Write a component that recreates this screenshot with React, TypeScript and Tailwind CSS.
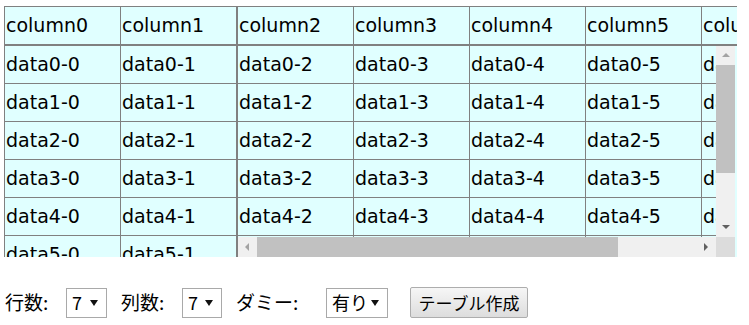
import React from 'react'

const ROWS = 7
const COLS = 7
const FROZEN = 2

const cellCls =
  'w-[116px] shrink-0 border-r border-b border-[#808080] bg-[#e0ffff] px-[1px] flex items-center whitespace-nowrap overflow-hidden'

const HeaderCells = ({ from, to }) => (
  <>
    {Array.from({ length: to - from }, (_, i) => (
      <div key={i} className={`${cellCls} h-[39px] border-b-2`}>
        column{from + i}
      </div>
    ))}
  </>
)

const BodyRows = ({ from, to }) => (
  <>
    {Array.from({ length: ROWS }, (_, r) => (
      <div key={r} className="flex">
        {Array.from({ length: to - from }, (_, c) => (
          <div key={c} className={`${cellCls} h-[38px]`}>
            data{r}-{from + c}
          </div>
        ))}
      </div>
    ))}
  </>
)

const Arrow = ({ dir, dark }) => {
  const pts = {
    up: '1,6 5,2 9,6',
    down: '1,2 5,6 9,2',
    left: '6,1 2,5 6,9',
    right: '2,1 6,5 2,9',
  }[dir]
  return (
    <svg width="10" height="10" viewBox="0 0 10 10">
      <polygon points={pts} fill={dark ? '#606060' : '#a3a3a3'} />
    </svg>
  )
}

const Dropdown = ({ value, width }) => (
  <div
    className={`${width} h-[30px] shrink-0 flex items-center justify-between border border-[#a9a9a9] bg-white pl-[5px] pr-[8px] text-[18px]`}
  >
    <span>{value}</span>
    <svg width="8" height="6" viewBox="0 0 8 6" className="mt-[1px]">
      <polygon points="0,0 8,0 4,6" fill="#111" />
    </svg>
  </div>
)

export default function App() {
  return (
    <div className="pt-[6px] pl-1 text-black font-['DejaVu_Sans',sans-serif] text-[19px]">
      {/* table */}
      <div className="flex items-start">
        {/* frozen columns */}
        <div className="shrink-0 border-l border-r border-[#808080]">
          <div className="flex border-t border-[#808080]">
            <HeaderCells from={0} to={FROZEN} />
          </div>
          <div className="h-[211px] overflow-hidden">
            <BodyRows from={0} to={FROZEN} />
          </div>
        </div>

        {/* scrolling columns */}
        <div className="w-[499px] shrink-0">
          <div className="flex overflow-hidden border-t border-[#808080] bg-[#e0ffff]">
            <HeaderCells from={FROZEN} to={COLS} />
          </div>
          <div className="flex h-[211px] bg-[#e0ffff]">
            <div className="flex w-[478px] shrink-0 flex-col">
              <div className="h-[191px] overflow-hidden">
                <BodyRows from={FROZEN} to={COLS} />
              </div>
              <div className="flex h-[20px] bg-[#f0f0f0]">
                <div className="flex w-[19px] items-center justify-center">
                  <Arrow dir="left" />
                </div>
                <div className="w-[361px] bg-[#c1c1c1]" />
                <div className="flex-1" />
                <div className="flex w-[19px] items-center justify-center">
                  <Arrow dir="right" dark />
                </div>
              </div>
            </div>
            <div className="flex w-[19px] shrink-0 flex-col bg-[#f0f0f0]">
              <div className="flex h-[19px] items-center justify-center">
                <Arrow dir="up" />
              </div>
              <div className="h-[108px] bg-[#c1c1c1]" />
              <div className="flex-1" />
              <div className="flex h-[19px] items-center justify-center">
                <Arrow dir="down" dark />
              </div>
              <div className="h-[20px] bg-[#dcdcdc]" />
            </div>
          </div>
        </div>
      </div>

      {/* controls */}
      <div className="mt-[30px] flex items-center font-['Noto_Sans_CJK_JP',sans-serif] text-[19px]">
        <span className="w-[62px] pl-[1px]">行数:</span>
        <Dropdown value="7" width="w-[41px]" />
        <span className="ml-[14px] w-[61px]">列数:</span>
        <Dropdown value="7" width="w-[40px]" />
        <span className="ml-[14px] w-[90px]">ダミー:</span>
        <Dropdown value="有り" width="w-[62px]" />
        <button className="ml-[22px] h-[31px] w-[118px] rounded-[2px] border border-[#adadad] bg-gradient-to-b from-[#f6f6f6] to-[#dddddd] text-[17px]">
          テーブル作成
        </button>
      </div>
    </div>
  )
}
